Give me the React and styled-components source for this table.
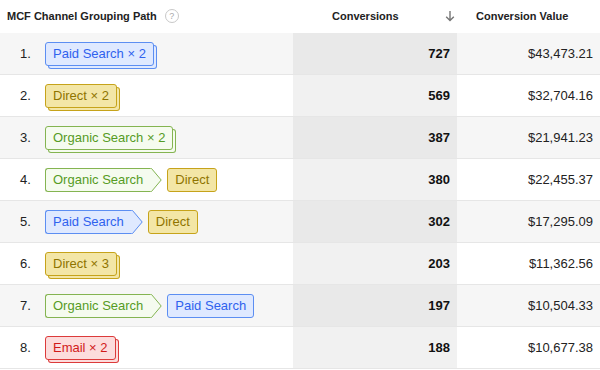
import React from "react";
import styled, { createGlobalStyle, css } from "styled-components";

const Global = createGlobalStyle`
  html, body { margin: 0; padding: 0; background: #fff; }
  body { font-family: "Liberation Sans", Arial, sans-serif; color: #222; }
`;

const palettes = {
  blue: { bg: "#dfe9ff", border: "#5c8ef2", text: "#2f62ee" },
  yellow: { bg: "#f3e6a6", border: "#c6a31a", text: "#8f7400" },
  green: { bg: "#f5fbef", border: "#84b451", text: "#559b25" },
  red: { bg: "#fcdcdc", border: "#dc3a3a", text: "#d11a1a" },
};

const Table = styled.div`
  width: 600px;
  display: flex;
  flex-direction: column;
`;

const Header = styled.div`
  display: grid;
  grid-template-columns: 293px 164px 143px;
  height: 33px;
  align-items: center;
  font-size: 11px;
  font-weight: bold;
  color: #222;
`;

const HeadFirst = styled.div`
  display: flex;
  align-items: center;
  padding-left: 7px;
  gap: 8px;
  margin-top: -1px;
`;

const Help = styled.span`
  width: 12px;
  height: 12px;
  border: 1px solid #c8c8c8;
  border-radius: 50%;
  display: inline-flex;
  align-items: center;
  justify-content: center;
  font-size: 9px;
  font-weight: normal;
  color: #aaa;
`;

const HeadConv = styled.div`
  display: flex;
  align-items: center;
  padding-left: 39px;
  padding-right: 2px;
  justify-content: space-between;
  margin-top: -1px;
`;

const HeadValue = styled.div`
  padding-left: 19px;
  margin-top: -1px;
`;

const Row = styled.div`
  display: grid;
  grid-template-columns: 293px 164px 143px;
  height: 41px;
  border-bottom: 1px solid #e6e6e6;
  background: ${(p) => (p.$odd ? "#f6f6f6" : "#fff")};
`;

const PathCell = styled.div`
  display: flex;
  align-items: center;
  padding-left: 20px;
`;

const Index = styled.span`
  width: 25px;
  font-size: 13px;
  color: #222;
`;

const ConvCell = styled.div`
  display: flex;
  align-items: center;
  justify-content: flex-end;
  padding-right: 7px;
  background: ${(p) => (p.$odd ? "#e9e9e9" : "#f1f1f1")};
  font-size: 13px;
  font-weight: bold;
  color: #111;
`;

const ValueCell = styled.div`
  display: flex;
  align-items: center;
  justify-content: flex-end;
  padding-right: 7px;
  font-size: 13px;
  color: #222;
`;

const Chip = styled.span`
  position: relative;
  display: inline-block;
  box-sizing: border-box;
  height: 24px;
  line-height: 16px;
  padding: 3px 7px;
  font-size: 13px;
  white-space: nowrap;
  border-radius: 3px;
  margin-right: 6px;
  ${(p) => {
    const c = palettes[p.$kind];
    return css`
      background: ${c.bg};
      border: 1px solid ${c.border};
      color: ${c.text};
      ${p.$stack &&
      css`
        box-shadow: 3px 3px 0 -1px ${c.bg}, 3px 3px 0 0 ${c.border};
      `}
      ${p.$arrow &&
      css`
        border-right: none;
        border-radius: 3px 0 0 3px;
        padding-right: 8px;
        margin-right: 16px;
      `}
    `;
  }}
`;

const Tip = styled.svg`
  position: absolute;
  left: 100%;
  top: -1px;
  width: 11px;
  height: 24px;
  overflow: visible;
`;

function Tag({ kind, label, stack, arrow }) {
  const c = palettes[kind];
  return (
    <Chip $kind={kind} $stack={stack} $arrow={arrow}>
      {label}
      {arrow && (
        <Tip viewBox="0 0 11 24">
          <polygon points="-0.5,0 0.5,0 10.5,12 0.5,24 -0.5,24" fill={c.bg} />
          <polyline
            points="-0.5,0.5 0.5,0.5 10.2,12 0.5,23.5 -0.5,23.5"
            fill="none"
            stroke={c.border}
            strokeWidth="1"
          />
        </Tip>
      )}
    </Chip>
  );
}

const rows = [
  { path: [{ kind: "blue", label: "Paid Search × 2", stack: true }], conv: "727", value: "$43,473.21" },
  { path: [{ kind: "yellow", label: "Direct × 2", stack: true }], conv: "569", value: "$32,704.16" },
  { path: [{ kind: "green", label: "Organic Search × 2", stack: true }], conv: "387", value: "$21,941.23" },
  {
    path: [
      { kind: "green", label: "Organic Search", arrow: true },
      { kind: "yellow", label: "Direct" },
    ],
    conv: "380",
    value: "$22,455.37",
  },
  {
    path: [
      { kind: "blue", label: "Paid Search", arrow: true },
      { kind: "yellow", label: "Direct" },
    ],
    conv: "302",
    value: "$17,295.09",
  },
  { path: [{ kind: "yellow", label: "Direct × 3", stack: true }], conv: "203", value: "$11,362.56" },
  {
    path: [
      { kind: "green", label: "Organic Search", arrow: true },
      { kind: "blue", label: "Paid Search" },
    ],
    conv: "197",
    value: "$10,504.33",
  },
  { path: [{ kind: "red", label: "Email × 2", stack: true }], conv: "188", value: "$10,677.38" },
];

function SortArrow() {
  return (
    <svg width="10" height="12" viewBox="0 0 10 12">
      <path d="M5 1 V10.5 M1.2 6.8 L5 10.6 L8.8 6.8" fill="none" stroke="#777" strokeWidth="1.4" />
    </svg>
  );
}

export default function App() {
  return (
    <>
      <Global />
      <Table>
        <Header>
          <HeadFirst>
            MCF Channel Grouping Path <Help>?</Help>
          </HeadFirst>
          <HeadConv>
            Conversions <SortArrow />
          </HeadConv>
          <HeadValue>Conversion Value</HeadValue>
        </Header>
        {rows.map((r, i) => (
          <Row key={i} $odd={i % 2 === 0}>
            <PathCell>
              <Index>{i + 1}.</Index>
              {r.path.map((t, j) => (
                <Tag key={j} {...t} />
              ))}
            </PathCell>
            <ConvCell $odd={i % 2 === 0}>{r.conv}</ConvCell>
            <ValueCell>{r.value}</ValueCell>
          </Row>
        ))}
      </Table>
    </>
  );
}
